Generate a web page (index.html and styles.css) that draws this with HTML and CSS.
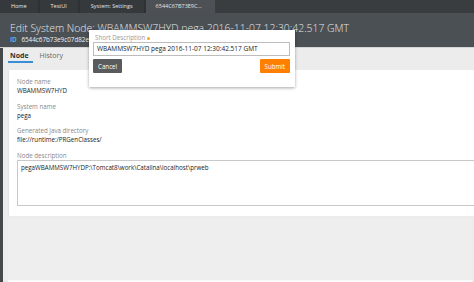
FILE: index.html
```html
<!DOCTYPE html>
<html lang="en">
<head>
  <meta charset="UTF-8" />
  <title>Edit System Node</title>
  <link rel="stylesheet" href="styles.css">
</head>
<body>

  <!-- Barra de separadores -->
  <div class="topbar">
    <div class="ttab">Home</div>
    <div class="ttab">TestUI</div>
    <div class="ttab">System: Settings</div>
    <div class="ttab ativo">6544C67B73E9C...</div>
  </div>

  <!-- Cabeçalho -->
  <div class="header">
    <div class="titulo">Edit System Node: WBAMMSW7HYD pega 2016-11-07 12:30:42.517 GMT</div>
    <div class="idlinha"><span class="idtag">ID</span> 6544c67b73e9c07d82e62ba3b9e0c5ff</div>
  </div>

  <div class="pagina">
    <div class="trilho"></div>
    <div class="principal">
      <div class="abas">
        <div class="aba ativo">Node</div>
        <div class="aba">History</div>
      </div>

      <div class="painel">
        <div class="campo">
          <div class="rotulo">Node name</div>
          <div class="valor">WBAMMSW7HYD</div>
        </div>
        <div class="campo">
          <div class="rotulo">System name</div>
          <div class="valor">pega</div>
        </div>
        <div class="campo">
          <div class="rotulo">Generated Java directory</div>
          <div class="valor">file://runtime:/PRGenClasses/</div>
        </div>
        <div class="campo">
          <div class="rotulo">Node description</div>
          <div class="caixa">pegaWBAMMSW7HYDP:\Tomcat8\work\Catalina\localhost\prweb</div>
        </div>
      </div>

      <div class="rodape"></div>
    </div>
  </div>

  <!-- Popup de descrição -->
  <div class="popup">
    <div class="rotulo-popup">Short Description<span class="obrig"></span></div>
    <div class="entrada">WBAMMSW7HYD pega 2016-11-07 12:30:42.517 GMT</div>
    <div class="botoes">
      <button class="btn cancelar">Cancel</button>
      <button class="btn enviar">Submit</button>
    </div>
  </div>

</body>
</html>
```

FILE: styles.css
```css
body {
  margin: 0;
  font-family: 'Open Sans', sans-serif;
  background: #ececec;
  height: 282px;
  overflow: hidden;
  display: flex;
  flex-direction: column;
}

.topbar {
  height: 13px;
  background: #3a3d40;
  display: flex;
}

.ttab {
  color: #e4e4e4;
  font-size: 5.5px;
  line-height: 13px;
  padding: 0 11px;
  background: #36393c;
  border-right: 2px solid #2f3234;
}

.ttab.ativo {
  background: #4d5156;
  padding: 0 13px 0 10px;
  border-right: none;
}

.header {
  height: 34px;
  background: #4b5055;
  padding-left: 10px;
  border-bottom: 1px solid #d6d6d6;
}

.titulo {
  color: #e6e6e6;
  font-size: 10.4px;
  font-weight: 300;
  padding-top: 8px;
  line-height: 14px;
}

.idlinha {
  color: #f0f0f0;
  font-size: 6.3px;
  line-height: 10px;
  width: 79px;
  white-space: nowrap;
  overflow: hidden;
}

.idtag {
  color: #4fb0e8;
  font-weight: 700;
  margin-right: 3px;
}

.pagina {
  flex: 1;
  display: flex;
}

.trilho {
  width: 3px;
  background: #45484b;
}

.principal {
  flex: 1;
  display: flex;
  flex-direction: column;
  padding-left: 5px;
  overflow: hidden;
}

.abas {
  height: 22px;
  display: flex;
  align-items: flex-start;
}

.aba {
  font-size: 7px;
  color: #666;
  padding: 3px 3px 0;
  margin-right: 4px;
  height: 10px;
  line-height: 10px;
}

.aba.ativo {
  color: #333;
  font-weight: 700;
  border-bottom: 2px solid #3a8ed6;
  padding: 3px 4px 0 2px;
}

.painel {
  background: #fff;
  padding: 8px 0 10px 8px;
  border-left: 1px solid #e4e4e4;
}

.campo {
  margin-bottom: 7.5px;
}

.campo:last-child {
  margin-bottom: 0;
}

.rotulo {
  font-size: 6.2px;
  color: #888;
  line-height: 8px;
}

.valor {
  font-size: 6.2px;
  color: #222;
  line-height: 9px;
}

.caixa {
  border: 1px solid #c9c9c9;
  height: 40px;
  font-size: 6.2px;
  color: #222;
  padding: 2px 3px;
  line-height: 9px;
  margin-right: -4px;
}

.rodape {
  flex: 1;
  background: #eeeeee;
  margin: 1px 2px 0 0;
  border-bottom: 2px solid #fafafa;
}

.popup {
  position: absolute;
  left: 89px;
  top: 30px;
  width: 197px;
  height: 54px;
  background: #fff;
  padding: 3px 5px 0 4px;
  box-shadow: 0 1px 3px rgba(0, 0, 0, 0.35);
}

.rotulo-popup {
  font-size: 6.2px;
  color: #999;
  line-height: 9px;
  padding-left: 2px;
}

.obrig {
  display: inline-block;
  width: 3px;
  height: 3px;
  border-radius: 50%;
  background: #f5a623;
  margin-left: 2px;
  vertical-align: middle;
}

.entrada {
  border: 1px solid #bdbdbd;
  height: 12px;
  line-height: 12px;
  font-size: 6.5px;
  color: #222;
  padding-left: 3px;
}

.botoes {
  display: flex;
  justify-content: space-between;
  margin-top: 3px;
}

.btn {
  font-family: 'Open Sans', sans-serif;
  font-size: 6.2px;
  color: #fff;
  border: none;
  height: 14px;
  padding: 0 5px;
  border-radius: 1px;
}

.cancelar {
  background: #595b5c;
}

.enviar {
  background: #ff7f00;
}
```
